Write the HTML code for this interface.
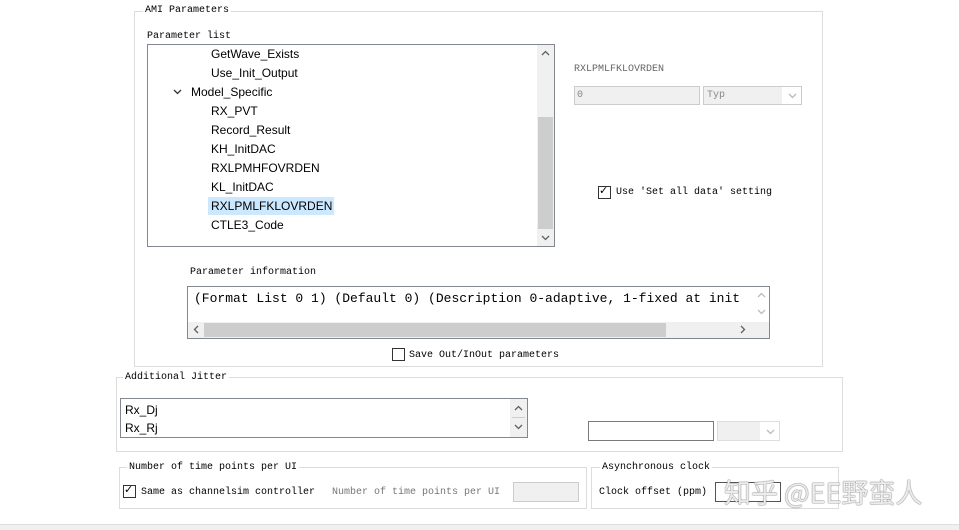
<!DOCTYPE html>
<html><head><meta charset="utf-8"><style>
*{margin:0;padding:0;box-sizing:border-box}
body{width:959px;height:530px;background:#fff;position:relative;overflow:hidden;font-family:"Liberation Mono",monospace;font-size:10px;color:#000}
.a{position:absolute;white-space:nowrap}
.grp{position:absolute;border:1px solid #dcdcdc}
.lbl{position:absolute;background:#fff;padding:0 2px;font-size:10px;line-height:12px}
.box{position:absolute;border:1px solid #828790;background:#fff}
.it{position:absolute;font-family:"Liberation Sans",sans-serif;font-size:12px;line-height:16px;color:#000}
.cb{position:absolute;width:13px;height:13px;border:1px solid #333;background:#fff}
.in{position:absolute;border:1px solid #ccc;background:#f0f0f0}
svg.ar{position:absolute;width:9px;height:6px;fill:none;stroke:#606060;stroke-width:1.3}
svg.al{position:absolute;width:6px;height:9px;fill:none;stroke:#606060;stroke-width:1.3}
</style></head><body>

<div class="grp" style="left:134px;top:11px;width:689px;height:356px"></div>
<div class="lbl" style="left:143px;top:5px">AMI Parameters</div>
<div class="a" style="left:147px;top:31px">Parameter list</div>
<div class="box" style="left:147px;top:44px;width:408px;height:203px"></div>
<div class="a" style="left:537px;top:45px;width:17px;height:201px;background:#f0f0f0"></div>
<div class="a" style="left:538px;top:117px;width:15px;height:112px;background:#cdcdcd"></div>
<svg class="ar" style="left:541px;top:50px"><path d="M1 5 L4.5 1.5 L8 5"/></svg>
<svg class="ar" style="left:541px;top:235px"><path d="M1 1 L4.5 4.5 L8 1"/></svg>
<div class="a" style="left:208px;top:197px;width:126px;height:18px;background:#cce8ff"></div>
<div class="it" style="left:211px;top:46px">GetWave_Exists</div>
<div class="it" style="left:211px;top:65px">Use_Init_Output</div>
<svg class="ar" style="left:173px;top:89px;stroke:#333"><path d="M1 1 L4.5 4.5 L8 1"/></svg>
<div class="it" style="left:191px;top:84px">Model_Specific</div>
<div class="it" style="left:211px;top:103px">RX_PVT</div>
<div class="it" style="left:211px;top:122px">Record_Result</div>
<div class="it" style="left:211px;top:141px">KH_InitDAC</div>
<div class="it" style="left:211px;top:160px">RXLPMHFOVRDEN</div>
<div class="it" style="left:211px;top:179px">KL_InitDAC</div>
<div class="it" style="left:211px;top:198px">RXLPMLFKLOVRDEN</div>
<div class="it" style="left:211px;top:217px">CTLE3_Code</div>

<div class="a" style="left:574px;top:64px;color:#666">RXLPMLFKLOVRDEN</div>
<div class="in" style="left:574px;top:86px;width:126px;height:19px"></div>
<div class="a" style="left:577px;top:90px;color:#888">0</div>
<div class="in" style="left:703px;top:86px;width:99px;height:19px;background:#fff"></div>
<div class="a" style="left:704px;top:87px;width:78px;height:17px;background:#f0f0f0"></div>
<div class="a" style="left:707px;top:90px;color:#888">Typ</div>
<svg class="ar" style="left:788px;top:93px;stroke:#bbb"><path d="M1 1 L4.5 4.5 L8 1"/></svg>

<div class="cb" style="left:598px;top:186px"></div>
<div class="a" style="left:599px;top:184px;font-family:'DejaVu Sans';font-size:11px">&#10003;</div>
<div class="a" style="left:616px;top:187px">Use 'Set all data' setting</div>

<div class="a" style="left:190px;top:267px">Parameter information</div>
<div class="box" style="left:187px;top:286px;width:583px;height:53px"></div>
<div class="a" style="left:194px;top:291px;font-size:13px">(Format List 0 1) (Default 0) (Description 0-adaptive, 1-fixed at init</div>
<div class="a" style="left:188px;top:322px;width:581px;height:16px;background:#f0f0f0"></div>
<div class="a" style="left:204px;top:323px;width:462px;height:14px;background:#cdcdcd"></div>
<svg class="al" style="left:193px;top:325px"><path d="M5 1 L1.5 4.5 L5 8"/></svg>
<svg class="al" style="left:740px;top:325px"><path d="M1 1 L4.5 4.5 L1 8"/></svg>
<svg class="ar" style="left:757px;top:292px;stroke:#bbb"><path d="M1 5 L4.5 1.5 L8 5"/></svg>
<svg class="ar" style="left:757px;top:309px;stroke:#bbb"><path d="M1 1 L4.5 4.5 L8 1"/></svg>

<div class="cb" style="left:392px;top:348px"></div>
<div class="a" style="left:409px;top:350px">Save Out/InOut parameters</div>

<div class="grp" style="left:116px;top:377px;width:727px;height:75px"></div>
<div class="lbl" style="left:123px;top:372px">Additional Jitter</div>
<div class="box" style="left:120px;top:398px;width:408px;height:40px"></div>
<div class="a" style="left:510px;top:399px;width:17px;height:38px;background:#f0f0f0"></div>
<div class="a" style="left:512px;top:417px;width:13px;height:1px;background:#cdcdcd"></div>
<svg class="ar" style="left:514px;top:405px"><path d="M1 5 L4.5 1.5 L8 5"/></svg>
<svg class="ar" style="left:514px;top:424px"><path d="M1 1 L4.5 4.5 L8 1"/></svg>
<div class="it" style="left:125px;top:402px">Rx_Dj</div>
<div class="it" style="left:125px;top:420px">Rx_Rj</div>
<div class="box" style="left:588px;top:421px;width:126px;height:20px;border-color:#7a7a7a"></div>
<div class="in" style="left:717px;top:421px;width:63px;height:20px;background:#fff;border-color:#ddd"></div>
<div class="a" style="left:718px;top:422px;width:42px;height:18px;background:#f0f0f0"></div>
<svg class="ar" style="left:766px;top:429px;stroke:#bbb"><path d="M1 1 L4.5 4.5 L8 1"/></svg>

<div class="grp" style="left:119px;top:467px;width:468px;height:42px"></div>
<div class="lbl" style="left:127px;top:462px">Number of time points per UI</div>
<div class="cb" style="left:123px;top:485px"></div>
<div class="a" style="left:124px;top:483px;font-family:'DejaVu Sans';font-size:11px">&#10003;</div>
<div class="a" style="left:141px;top:487px">Same as channelsim controller</div>
<div class="a" style="left:332px;top:487px;color:#777">Number of time points per UI</div>
<div class="in" style="left:513px;top:482px;width:66px;height:20px"></div>

<div class="grp" style="left:591px;top:467px;width:248px;height:42px"></div>
<div class="lbl" style="left:600px;top:462px">Asynchronous clock</div>
<div class="a" style="left:599px;top:487px">Clock offset (ppm)</div>
<div class="a" style="left:715px;top:482px;width:66px;height:20px;border:1px solid #555"></div>
<div class="a" style="left:724px;top:472px;font-family:'Noto Sans CJK SC',sans-serif;font-size:27px;color:#ececec;text-shadow:0 0 1px #666,0 0 1px #666">知乎 @EE野蛮人</div>

<div class="a" style="left:0;top:524px;width:959px;height:6px;background:#f0f0f0;border-top:1px solid #ddd"></div>
</body></html>
